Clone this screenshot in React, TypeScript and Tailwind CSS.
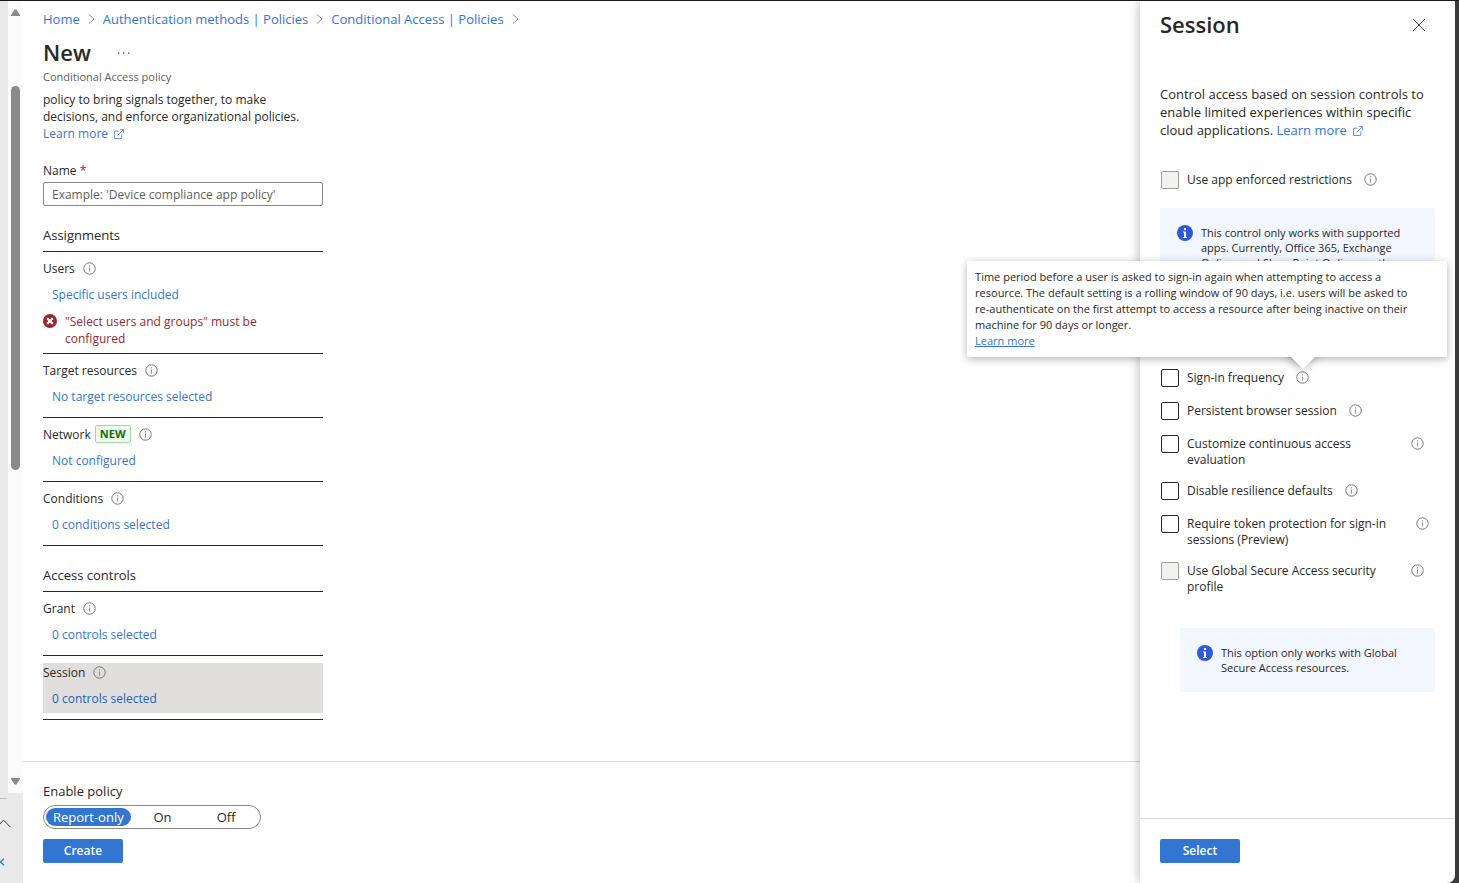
import { useState } from 'react'

const assignments = [
  { label: 'Users', value: 'Specific users included', error: '"Select users and groups" must be configured' },
  { label: 'Target resources', value: 'No target resources selected' },
  { label: 'Network', value: 'Not configured', badge: 'NEW' },
  { label: 'Conditions', value: '0 conditions selected' },
]

const accessControls = [
  { label: 'Grant', value: '0 controls selected' },
  { label: 'Session', value: '0 controls selected', active: true },
]

const breadcrumbs = ['Home', 'Authentication methods | Policies', 'Conditional Access | Policies']

type SettingItem = { label: string; value: string; error?: string; badge?: string; active?: boolean }

function InfoIcon() {
  return (
    <svg viewBox="0 0 13 13" className="h-[13px] w-[13px] shrink-0" fill="none" stroke="#767676" aria-hidden="true">
      <circle cx="6.5" cy="6.5" r="5.7" />
      <path d="M6.5 5.5v4M6.5 3.3v1.2" strokeWidth="1.1" stroke="#8f8f8f" />
    </svg>
  )
}

function ExternalIcon() {
  return (
    <svg viewBox="0 0 11 11" className="ml-1.5 inline-block h-2.5 w-2.5 align-[-1px]" fill="none" stroke="#5b8bdd" aria-hidden="true">
      <path d="M5 2.5H.5v8h8V6M6.5.5h4v4M10.3.7 4 7" />
    </svg>
  )
}

function InfoBadge() {
  return (
    <svg viewBox="0 0 16 16" className="h-4 w-4 shrink-0" aria-hidden="true">
      <circle cx="8" cy="8" r="8" fill="#2f5bd8" />
      <path d="M6 6.5h3V12h1v1H6v-1h1V7.5H6zM7 3h2v2H7z" fill="#fff" />
    </svg>
  )
}

function ErrorBadge() {
  return (
    <svg viewBox="0 0 14 14" className="mt-px h-3.5 w-3.5 shrink-0" aria-hidden="true">
      <circle cx="7" cy="7" r="7" fill="#962a31" />
      <path d="m4.2 4.2 5.6 5.6M9.8 4.2 4.2 9.8" stroke="#fff" strokeWidth="2.2" />
    </svg>
  )
}

function Chevron() {
  return (
    <svg viewBox="0 0 7 10" className="mx-2 h-2.5 w-[7px]" fill="none" stroke="#8a8a8a" aria-hidden="true">
      <path d="M.9.4 6 5 .9 9.6" />
    </svg>
  )
}

function Setting({ item }: { item: SettingItem }) {
  return (
    <div className="border-b border-[#292827] pt-[7px] pb-1.5">
      <div className={item.active ? 'bg-[#e1dfdd] pb-[5px]' : item.error ? '' : 'pb-[5px]'}>
        <div className="flex h-[18px] items-center">
          <span>{item.label}</span>
          {item.badge && <span className="ml-1 rounded-[2px] border border-[#9fd89f] bg-[#f1faf1] px-1 text-[11px] leading-4 font-bold text-[#0e700e]">{item.badge}</span>}
          <span className="ml-2"><InfoIcon /></span>
        </div>
        <a href="#" className={item.active ? 'mt-[9px] ml-[9px] block leading-[18px] text-[#2160b8]' : 'mt-[9px] ml-[9px] block leading-[18px] text-[#3276d2]'}>{item.value}</a>
      </div>
      {item.error && (
        <div className="mt-[9px] flex gap-2 pr-8 text-[#962a31]">
          <ErrorBadge />
          <p>{item.error}</p>
        </div>
      )}
    </div>
  )
}

function SessionOption({ id, label, disabled, wide, children }: { id: string; label: string; disabled?: boolean; wide?: boolean; children?: React.ReactNode }) {
  return (
    <div className="flex items-start pl-px">
      <input id={id} type="checkbox" disabled={disabled} className="h-[18px] w-[18px] shrink-0 appearance-none rounded-[2px] border border-[#292827] bg-white checked:bg-[#3276d2] disabled:border-[#a19f9d] disabled:bg-[#f3f2f1]" />
      <label htmlFor={id} className={wide ? '-mb-px ml-2 max-w-[217px] pt-px leading-4' : '-mb-px ml-2 max-w-[212px] pt-px leading-4'}>{label}</label>
      <span className="relative ml-3 pt-0.5">
        <InfoIcon />
        {children}
      </span>
    </div>
  )
}

function Tooltip() {
  return (
    <div role="tooltip" className="absolute right-[-138px] bottom-[27px] w-[480px] rounded-[2px] bg-white py-2 pr-7 pl-2 text-[11px] leading-4 shadow-[0_2px_8px_rgba(0,0,0,0.3)]">
      <div className="absolute right-[132px] -bottom-[7px] h-6 w-6 rotate-45 bg-white shadow-[0_2px_8px_rgba(0,0,0,0.3)]" />
      <div className="absolute inset-0 rounded-[2px] bg-white" />
      <p className="relative">
        Time period before a user is asked to sign-in again when attempting to access a resource. The default setting is a rolling window of 90 days, i.e. users will be asked to <span className="whitespace-nowrap">re-authenticate</span> on the first attempt to access a resource after being inactive on their machine for 90 days or longer.
      </p>
      <a href="#" className="relative block text-[#3276d2] underline">Learn more</a>
    </div>
  )
}

function PageScrollbar() {
  return (
    <div className="flex w-[23px] shrink-0 flex-col bg-[#e9e9e9]">
      <div className="ml-2 flex flex-1 flex-col items-center bg-[#fcfcfc] py-2">
        <svg viewBox="0 0 9 7" className="h-[7px] w-[9px]" fill="#8a8a8a" aria-hidden="true"><path d="M3.5.5h2L9 6v1H0V6z" /></svg>
        <div className="mt-[70px] h-96 w-[9px] rounded-full bg-[#8a8a8a]" />
        <svg viewBox="0 0 9 7" className="mt-auto h-[7px] w-[9px]" fill="#8a8a8a" aria-hidden="true"><path d="M3.5 6.5h2L9 1V0H0v1z" /></svg>
      </div>
      <div className="h-[90px] pt-[5px]">
        <div className="w-[7px] border-t border-[#c4c4c4]" />
        <svg viewBox="0 0 11 9" className="mt-5 h-[9px] w-[11px]" fill="none" stroke="#333" aria-hidden="true"><path d="M-2 7 3.5 1.2l7 7" /></svg>
        <svg viewBox="0 0 5 8" className="mt-[30px] h-2 w-[5px]" fill="none" stroke="#3276d2" strokeWidth="1.3" aria-hidden="true"><path d="M4 .7.5 4 4 7.3" /></svg>
      </div>
    </div>
  )
}

function PolicyForm() {
  const [mode, setMode] = useState('Report-only')

  return (
    <main className="flex min-w-0 flex-1 flex-col">
      <div className="flex-1 px-5 pt-2">
        <nav aria-label="Breadcrumb" className="flex h-5 items-center text-[13px]">
          {breadcrumbs.map((item) => (
            <span key={item} className="flex items-center">
              <a href="#" className="text-[#3276d2]">{item}</a>
              <Chevron />
            </span>
          ))}
        </nav>
        <div className="mt-2 flex h-8 items-center">
          <h1 className="pb-0.5 text-[22px] font-semibold">New</h1>
          <button type="button" aria-label="More" className="ml-[27px]">
            <svg viewBox="0 0 12 2" className="h-0.5 w-3" fill="#555" aria-hidden="true"><path d="M0 .5h1.4v1.3H0zM5 .5h1.4v1.3H5zM10 .5h1.4v1.3H10z" /></svg>
          </button>
        </div>
        <div className="text-[11px] leading-4 text-[#605e5c]">Conditional Access policy</div>
        <div className="mt-1.5 w-[280px]">
          <p>policy to bring signals together, to make decisions, and enforce organizational policies.</p>
          <a href="#" className="text-[#3276d2]">Learn more<ExternalIcon /></a>
          <label htmlFor="policy-name" className="mt-5 block">Name <span className="text-[#962a31]">*</span></label>
          <input id="policy-name" type="text" placeholder="Example: 'Device compliance app policy'" className="mt-[3px] h-6 w-full rounded-[2px] border border-[#8a8886] px-2 placeholder:text-[#605e5c]" />
          <h2 className="mt-5 border-b border-[#292827] pb-[7px] text-[13px] leading-[18px]">Assignments</h2>
          {assignments.map((item) => <Setting key={item.label} item={item} />)}
          <h2 className="mt-5 border-b border-[#292827] pb-[7px] text-[13px] leading-[18px]">Access controls</h2>
          {accessControls.map((item) => <Setting key={item.label} item={item} />)}
        </div>
      </div>
      <footer className="border-t border-[#d9d9d9] px-5 pt-5 pb-5">
        <fieldset className="text-[13px]">
          <legend className="leading-[18px]">Enable policy</legend>
          <div className="mt-[5px] flex h-6 w-[218px] items-center rounded-full border border-[#8a8886] px-0.5">
            {['Report-only', 'On', 'Off'].map((item) => (
              <label key={item} className={item === 'Report-only' ? 'flex h-[18px] w-[85px] items-center justify-center rounded-full has-checked:bg-[#3276d2] has-checked:text-white' : 'flex h-[18px] w-16 items-center justify-center rounded-full has-checked:bg-[#3276d2] has-checked:text-white'}>
                <input type="radio" name="mode" className="sr-only" checked={mode === item} onChange={() => setMode(item)} />
                {item}
              </label>
            ))}
          </div>
        </fieldset>
        <button type="button" className="mt-2.5 h-6 w-20 rounded-[2px] bg-[#3276d2] pb-px font-semibold text-white">Create</button>
      </footer>
    </main>
  )
}

function SessionPanel() {
  return (
    <aside className="relative flex w-[315px] shrink-0 flex-col rounded-br-lg bg-white shadow-[0_0_12px_rgba(0,0,0,0.3)]">
      <div className="flex-1 px-5">
        <div className="flex h-12 items-center justify-between">
          <h2 className="pb-0.5 text-[22px] font-semibold">Session</h2>
          <button type="button" aria-label="Close" className="mr-2.5">
            <svg viewBox="0 0 12 12" className="h-3 w-3" fill="none" stroke="#444" aria-hidden="true"><path d="m0 0 12 12M12 0 0 12" /></svg>
          </button>
        </div>
        <p className="mt-9 text-[13px] leading-[18px]">
          Control access based on session controls to enable limited experiences within specific cloud applications. <a href="#" className="text-[#3276d2]">Learn more<ExternalIcon /></a>
        </p>
        <div className="mt-8">
          <SessionOption id="app-enforced" label="Use app enforced restrictions" disabled />
        </div>
        <div className="mt-[19px] flex min-h-[130px] gap-2 rounded-[2px] bg-[#f1f6ff] p-[17px] text-[11px] leading-[15px]">
          <InfoBadge />
          <p>This control only works with supported apps. Currently, Office 365, Exchange Online, and SharePoint Online are the</p>
        </div>
        <div className="mt-[31px] flex flex-col gap-[15px]">
          <SessionOption id="frequency" label="Sign-in frequency"><Tooltip /></SessionOption>
          <SessionOption id="persistent" label="Persistent browser session" />
          <SessionOption id="evaluation" label="Customize continuous access evaluation" />
          <SessionOption id="resilience" label="Disable resilience defaults" />
          <SessionOption id="token" label="Require token protection for sign-in sessions (Preview)" wide />
          <SessionOption id="global-access" label="Use Global Secure Access security profile" disabled />
        </div>
        <div className="mt-[34px] ml-5 flex gap-2 rounded-[2px] bg-[#f1f6ff] p-[17px] text-[11px] leading-[15px]">
          <InfoBadge />
          <p>This option only works with Global Secure Access resources.</p>
        </div>
      </div>
      <footer className="border-t border-[#d9d9d9] p-5">
        <button type="button" className="h-6 w-20 rounded-[2px] bg-[#3276d2] pb-px font-semibold text-white">Select</button>
      </footer>
    </aside>
  )
}

export default function App() {
  return (
    <div className="flex min-h-screen border-t border-[#1b1a19] bg-[#3a3a3a] pr-1 font-['Open_Sans','Noto_Sans',sans-serif] text-[12px] leading-[17px] text-[#292827]">
      <div className="flex min-w-0 flex-1 overflow-hidden rounded-br-lg bg-white">
        <PageScrollbar />
        <PolicyForm />
        <SessionPanel />
      </div>
    </div>
  )
}
